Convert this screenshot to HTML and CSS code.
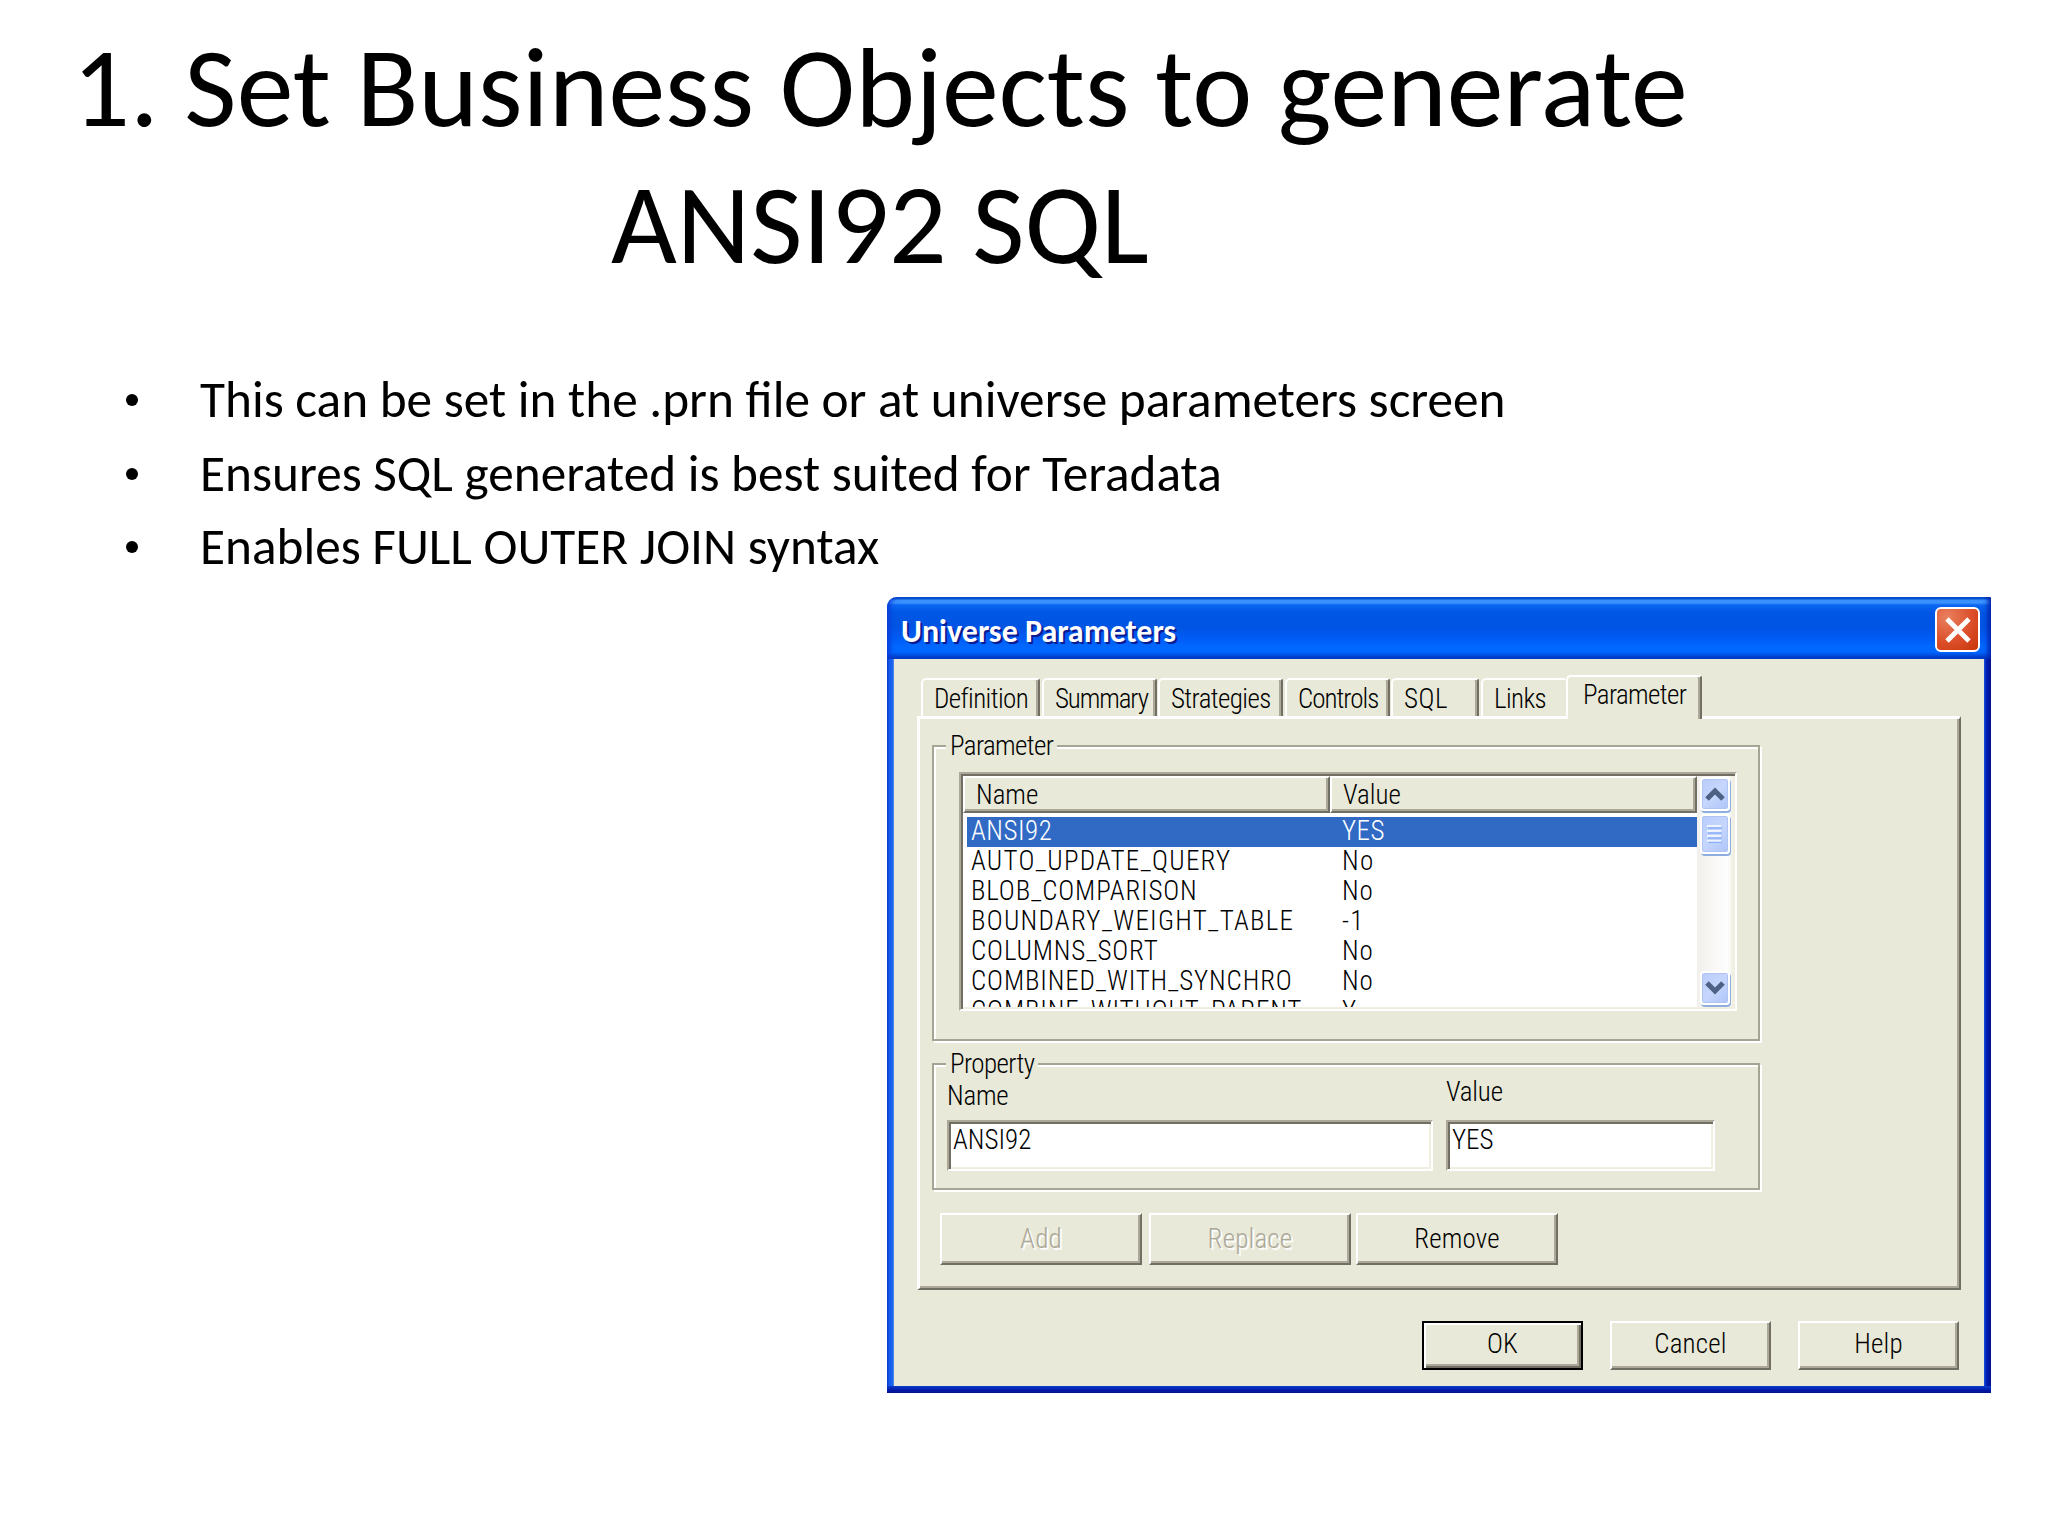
FILE: index.html
```
<!DOCTYPE html>
<html lang="en">
<head>
    <meta charset="UTF-8">
    <meta name="viewport" content="width=device-width, initial-scale=1.0">
    <title>Set Business Objects to generate ANSI92 SQL</title>
    <link rel="stylesheet" href="styles.css">
</head>
<body>
    <h1 class="slide-title">1. Set Business Objects to generate<br>ANSI92 SQL</h1>

    <ul class="bullets">
        <li>This can be set in the .prn file or at universe parameters screen</li>
        <li>Ensures SQL generated is best suited for Teradata</li>
        <li>Enables FULL OUTER JOIN syntax</li>
    </ul>

    <div class="window">
        <div class="title-bar">
            <span class="window-title">Universe Parameters</span>
            <div class="close">
                <svg width="26" height="26" viewBox="0 0 26 26">
                    <path d="M2 2L24 24M24 2L2 24" stroke="#fff" stroke-width="4.8" fill="none"/>
                </svg>
            </div>
        </div>

        <div class="window-body">
            <div class="tabs">
                <div class="tab definition">Definition</div>
                <div class="tab summary">Summary</div>
                <div class="tab strategies">Strategies</div>
                <div class="tab controls">Controls</div>
                <div class="tab sql">SQL</div>
                <div class="tab links">Links</div>
                <div class="tab active">Parameter</div>
            </div>

            <div class="panel">
                <fieldset class="group parameter-group">
                    <legend>Parameter</legend>
                    <div class="list sunken">
                        <div class="list-main">
                            <div class="list-header">
                                <div class="header-cell">Name</div>
                                <div class="header-cell">Value</div>
                            </div>
                            <div class="rows">
                                <div class="row selected"><span>ANSI92</span><span>YES</span></div>
                                <div class="row wide"><span>AUTO_UPDATE_QUERY</span><span>No</span></div>
                                <div class="row"><span>BLOB_COMPARISON</span><span>No</span></div>
                                <div class="row wide"><span>BOUNDARY_WEIGHT_TABLE</span><span>-1</span></div>
                                <div class="row"><span>COLUMNS_SORT</span><span>No</span></div>
                                <div class="row"><span>COMBINED_WITH_SYNCHRO</span><span>No</span></div>
                                <div class="row"><span>COMBINE_WITHOUT_PARENT</span><span>Y</span></div>
                            </div>
                        </div>
                        <div class="scrollbar">
                            <div class="scroll-button">
                                <svg width="20" height="14" viewBox="0 0 20 14">
                                    <path d="M2 12L10 4L18 12" stroke="#4d6185" stroke-width="5" fill="none"/>
                                </svg>
                            </div>
                            <div class="scroll-thumb">
                                <svg width="16" height="18" viewBox="0 0 16 18">
                                    <path d="M0 1H14M0 6H14M0 11H14M0 16H14" stroke="#eef4fe" stroke-width="2"/>
                                    <path d="M1 3H15M1 8H15M1 13H15M1 17.5H15" stroke="#8cb0f8" stroke-width="1.6"/>
                                </svg>
                            </div>
                            <div class="scroll-button down">
                                <svg width="20" height="14" viewBox="0 0 20 14">
                                    <path d="M2 2L10 10L18 2" stroke="#4d6185" stroke-width="5" fill="none"/>
                                </svg>
                            </div>
                        </div>
                    </div>
                </fieldset>

                <fieldset class="group property-group">
                    <legend>Property</legend>
                    <div class="fields">
                        <div class="field name-field">
                            <label>Name</label>
                            <div class="input sunken">ANSI92</div>
                        </div>
                        <div class="field value-field">
                            <label>Value</label>
                            <div class="input sunken">YES</div>
                        </div>
                    </div>
                </fieldset>

                <div class="panel-buttons">
                    <button class="disabled">Add</button>
                    <button class="disabled">Replace</button>
                    <button class="remove">Remove</button>
                </div>
            </div>

            <div class="dialog-buttons">
                <button class="default">OK</button>
                <button>Cancel</button>
                <button>Help</button>
            </div>
        </div>
    </div>
</body>
</html>
```
FILE: styles.css
```
* {
    box-sizing: border-box;
}

body {
    margin: 0;
    height: 1536px;
    overflow: hidden;
    background-color: #fff;
    color: #000;
    font-family: Calibri, Carlito, Lato, sans-serif;
    display: flow-root;
}

.slide-title {
    width: 1760px;
    margin: 19px 0 0;
    font-size: 113.78px;
    font-weight: normal;
    line-height: 137px;
    text-align: center;
}

.bullets {
    list-style-type: none;
    margin: 70px 0 0;
    padding: 0 0 0 126px;
    height: 220px;
    font-size: 51.27px;
    line-height: 73.7px;
}

.bullets li {
    display: flex;
    align-items: center;
}

.bullets li::before {
    content: "";
    width: 12px;
    height: 12px;
    margin-right: 62px;
    border-radius: 50%;
    background-color: #000;
}

/* window frame */
.window {
    width: 1104px;
    height: 796px;
    margin: 14px 0 0 887px;
    padding: 0 7px 7px;
    border-radius: 10px 2px 0 0;
    background:
        linear-gradient(#0a3cc8, #0019a8 60%, #00138c) bottom / 100% 7px no-repeat,
        linear-gradient(to right, #0a35cf, #1560ee 40%, #1560ee 75%, #5b93e8) left / 7px 100% no-repeat,
        linear-gradient(to right, #1650dd, #0019b0 40%, #00138c) right / 7px 100% no-repeat;
    font-family: Roboto, "Liberation Sans", sans-serif;
    font-stretch: 75%;
    font-size: 27px;
    font-weight: 350;
    line-height: 31px;
    letter-spacing: -0.6px;
}

.title-bar {
    display: flex;
    justify-content: space-between;
    height: 62px;
    margin: 0 -7px;
    padding: 10px 11px 0 14px;
    border-radius: 10px 2px 0 0;
    background: linear-gradient(#0a5ad0 0, #0a5ad0 2px, #3a93ff 3px, #3a90ff 6px, #0a66f0 8px, #0056e5 16px, #0054e3 30px, #005cf5 42px, #0068ff 49px, #0066ff 55px, #0048d8 59px, #003cc0 62px);
    box-shadow: inset -5px 0 5px -2px #0020a8, inset 5px 0 5px -2px #0a3cd8;
}

.window-title {
    color: #fff;
    font-family: Calibri, Carlito, sans-serif;
    font-stretch: normal;
    font-size: 32px;
    font-weight: bold;
    line-height: 50px;
    letter-spacing: 0;
    text-shadow: 2px 2px 0 #0a1a90;
}

.close {
    display: flex;
    justify-content: center;
    align-items: center;
    width: 45px;
    height: 45px;
    border: 2px solid #fff;
    border-radius: 6px;
    background: radial-gradient(circle at 25% 20%, #e9805f, #dc4f2a 55%, #c93608);
}

.window-body {
    height: 727px;
    padding: 16px 23px 0;
    background-color: #e8e9d8;
}

/* tabs */
.tabs {
    display: flex;
    align-items: flex-end;
    height: 41px;
    margin-left: 4px;
}

.tab {
    height: 38px;
    padding: 4px 0 0 11px;
    border: 2px solid;
    border-color: #fff #716f64 transparent #fff;
    border-bottom: 0;
    border-radius: 5px 3px 0 0;
    box-shadow: inset -2px 0 0 #aca899;
    white-space: nowrap;
}

.definition {
    width: 119px;
    margin-right: 2px;
}

.summary {
    width: 115px;
    margin-right: 1px;
    letter-spacing: -1.1px;
}

.strategies {
    width: 125px;
    margin-right: 2px;
}

.controls {
    width: 105px;
    margin-right: 1px;
    letter-spacing: -1px;
}

.sql {
    width: 88px;
    margin-right: 2px;
    letter-spacing: 0.5px;
}

.links {
    width: 85px;
    border-right: 0;
    box-shadow: none;
}

.active {
    position: relative;
    width: 136px;
    height: 44px;
    margin-bottom: -3px;
    padding: 3px 0 0 15px;
    background-color: #e8e9d8;
}

.panel {
    height: 574px;
    padding: 12px 0 0 12px;
    border: 3px solid #fff;
    border-right: 2px solid #716f64;
    border-bottom: 2px solid #716f64;
    box-shadow: inset -2px -2px 0 #aca899;
}

/* group boxes */
.group {
    width: 828px;
    margin: 0;
    padding: 0;
    border: 2px solid #a5a594;
    box-shadow: 2px 2px 0 #fff, inset 2px 2px 0 #fff;
}

.group legend {
    height: 30px;
    margin-left: 12px;
    padding: 0 4px;
    background-color: #e8e9d8;
}

.parameter-group {
    height: 310px;
}

.property-group {
    height: 141px;
    margin-top: 8px;
}

.sunken {
    padding: 2px;
    border: 2px solid;
    border-color: #aca899 #fff #fff #aca899;
    background-color: #fff;
    box-shadow: inset 2px 2px 0 #716f64, inset -2px -2px 0 #f1efe2;
}

/* parameter list */
.list {
    display: flex;
    width: 778px;
    height: 239px;
    margin: 11px 0 0 25px;
}

.list-main {
    width: 734px;
    height: 231px;
    overflow: hidden;
}

.list-header {
    display: flex;
    height: 37px;
}

.header-cell {
    width: 367px;
    padding: 2px 0 0 11px;
    border: 2px solid;
    border-color: #fff #716f64 #716f64 #fff;
    background-color: #e8e9d8;
    box-shadow: inset -2px -2px 0 #aca899;
    letter-spacing: 0;
}

.rows {
    margin: 4px 0 0 4px;
    letter-spacing: 0.85px;
}

.row {
    display: grid;
    grid-template-columns: 371px 1fr;
    height: 30px;
    padding-left: 4px;
    line-height: 29px;
}

.wide {
    letter-spacing: 1.25px;
}

.selected {
    background-color: #316ac5;
    color: #fff;
    letter-spacing: 0.5px;
}

.scrollbar {
    display: flex;
    flex-direction: column;
    align-items: center;
    width: 36px;
    padding: 1px 3px 0 3px;
    background: linear-gradient(to right, #f2f0ec, #fefefe 85%, #f0efe4);
}

.scroll-button,
.scroll-thumb {
    display: flex;
    justify-content: center;
    align-items: center;
    width: 30px;
    height: 34px;
    border: 2px solid #fff;
    border-radius: 4px;
    background: linear-gradient(135deg, #b9ccfb, #c6d6fd 50%, #adc5f8);
    box-shadow: inset 0 0 0 1px #b0c4f4, 1px 2px 0 #8faee0;
}

.scroll-thumb {
    height: 40px;
    margin-top: 3px;
}

.down {
    margin-top: 117px;
}

/* property fields */
.fields {
    display: flex;
    align-items: flex-end;
    gap: 13px;
    height: 92px;
    margin-left: 13px;
}

.name-field {
    width: 486px;
}

.value-field {
    width: 269px;
}

.field label {
    display: block;
    height: 39px;
    letter-spacing: -0.2px;
}

.value-field label {
    height: 43px;
}

.input {
    height: 51px;
    padding: 3px 0 0 4px;
    letter-spacing: 0;
}

/* buttons */
button {
    width: 161px;
    height: 49px;
    padding: 0 0 3px;
    border: 2px solid;
    border-color: #fff #716f64 #716f64 #fff;
    background-color: #e8e9d8;
    box-shadow: inset -2px -2px 0 #aca899;
    color: #000;
    font: inherit;
    font-stretch: 75%;
    letter-spacing: 0.2px;
}

.panel-buttons {
    display: flex;
    gap: 7px;
    margin: 23px 0 0 8px;
}

.panel-buttons button {
    width: 202px;
    height: 52px;
    padding: 1px 0 0;
}

.panel-buttons .remove {
    margin-left: -2px;
}

.panel-buttons .disabled {
    color: #aca899;
    text-shadow: 2px 2px 0 #fff;
}

.dialog-buttons {
    display: flex;
    justify-content: flex-end;
    gap: 27px;
    margin: 31px 2px 0 0;
}

.default {
    border-color: #000;
    box-shadow: inset 2px 2px 0 #fff, inset -2px -2px 0 #716f64, inset -4px -4px 0 #aca899;
}
```
